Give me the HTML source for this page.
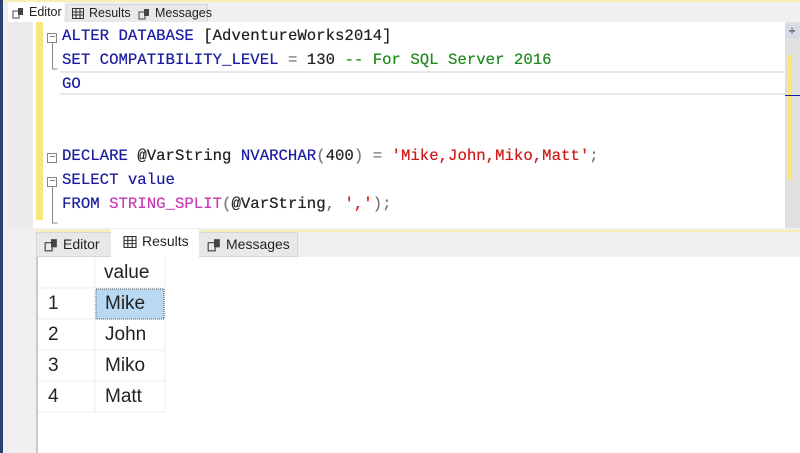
<!DOCTYPE html>
<html><head><style>
body{margin:0;width:800px;height:453px;overflow:hidden;background:#f0f0f0;position:relative;font-family:"Liberation Sans",sans-serif}
.a{position:absolute}
.code{font-family:"Liberation Mono",monospace;font-size:15.7px;color:#1c1ca0;white-space:pre;line-height:24px;text-shadow:0 0 0.4px currentColor}
.tab{position:absolute;font-size:12.5px;color:#222;height:18px;line-height:18px}
.tab2{position:absolute;font-size:14px;color:#222;line-height:26px}
.ico{display:inline-block;vertical-align:middle;margin-right:5px}
.g{position:absolute;font-size:19px;color:#222}
</style></head><body>
<div class="a" style="left:0;top:0;width:800px;height:2px;background:#f6f0b8"></div>
<div class="a" style="left:0;top:0;width:3px;height:453px;background:#2d4170"></div>
<!-- top tabs -->
<div class="a" style="left:8px;top:2px;width:56px;height:20px;background:#fff"></div>
<div class="tab" style="left:12px;top:3px"><svg class="ico" width="12" height="12" viewBox="0 0 12 12"><rect x="1" y="4" width="6" height="7" fill="none" stroke="#444"/><rect x="6" y="1" width="5" height="7" fill="#444"/></svg>Editor</div>
<div class="a" style="left:66px;top:4px;width:140px;height:18px;background:#e8e8e8;border:1px solid #d8d8d8;border-bottom:none"></div>
<div class="tab" style="left:72px;top:4px"><svg class="ico" width="12" height="11" viewBox="0 0 12 11"><rect x="0.5" y="0.5" width="11" height="10" fill="none" stroke="#333"/><path d="M0 4h12M0 7h12M4 0v11M8 0v11" stroke="#333"/></svg>Results</div>
<div class="tab" style="left:138px;top:4px"><svg class="ico" width="12" height="12" viewBox="0 0 12 12"><rect x="1" y="4" width="6" height="7" fill="none" stroke="#444"/><rect x="6" y="1" width="5" height="7" fill="#444"/></svg>Messages</div>
<!-- editor -->
<div class="a" style="left:8px;top:22px;width:777px;height:206px;background:#fff"></div>
<div class="a" style="left:8px;top:22px;width:25px;height:206px;background:#ebebeb"></div>
<div class="a" style="left:36px;top:22px;width:7px;height:198px;background:#f5e77a"></div>
<div class="a" style="left:60px;top:71px;width:725px;height:24px;border-top:2px solid #e8e8e8;border-bottom:2px solid #e8e8e8;box-sizing:border-box"></div>
<div class="a" style="left:785px;top:22px;width:15px;height:206px;background:#e0e0e0"></div>
<div class="a" style="left:788px;top:55px;width:4px;height:125px;background:#f5e77a"></div>
<div class="a" style="left:785px;top:95px;width:15px;height:1px;background:#1a1aa6"></div>
<div class="a" style="left:785px;top:24px;width:14px;height:14px;background:#d6dbe6;font-size:12px;text-align:center;line-height:14px">÷</div>
<!-- fold markers -->
<svg class="a" style="left:46px;top:28px" width="14" height="200">
<g fill="#fff" stroke="#888"><rect x="1.5" y="5.5" width="9" height="9"/><rect x="1.5" y="125.5" width="9" height="9"/><rect x="1.5" y="149.5" width="9" height="9"/></g>
<path d="M4 8.5h5M4 128.5h5M4 152.5h5M6.5 15v26h5M6.5 159v36h5" stroke="#888" fill="none"/>
</svg>
<div class="code a" style="left:62px;top:24px">ALTER DATABASE <span style="color:#222">[AdventureWorks2014]</span>
SET COMPATIBILITY_LEVEL <span style="color:#777">=</span> <span style="color:#222">130</span> <span style="color:#1e8a1e">-- For SQL Server 2016</span>
GO


DECLARE <span style="color:#222">@VarString</span> NVARCHAR<span style="color:#777">(</span><span style="color:#222">400</span><span style="color:#777">)</span> <span style="color:#777">=</span> <span style="color:#d01818">'Mike,John,Miko,Matt'</span><span style="color:#777">;</span>
SELECT value
FROM <span style="color:#c83bb4">STRING_SPLIT</span><span style="color:#777">(</span><span style="color:#222">@VarString</span><span style="color:#777">,</span> <span style="color:#d01818">','</span><span style="color:#777">);</span></div>
<!-- results tabs -->
<div class="a" style="left:35px;top:230px;width:765px;height:2px;background:#f6f0b8"></div>
<div class="a" style="left:36px;top:232px;width:262px;height:25px;background:#e8e8e8;border:1px solid #d6d6d6;box-sizing:border-box"></div>
<div class="a" style="left:111px;top:229px;width:88px;height:28px;background:#fff"></div>
<div class="tab2" style="left:44px;top:231px"><svg class="ico" width="14" height="14" viewBox="0 0 12 12"><rect x="1" y="4" width="6" height="7" fill="none" stroke="#444"/><rect x="6" y="1" width="5" height="7" fill="#444"/></svg>Editor</div>
<div class="tab2" style="left:123px;top:228px"><svg class="ico" width="14" height="12" viewBox="0 0 12 11"><rect x="0.5" y="0.5" width="11" height="10" fill="none" stroke="#333"/><path d="M0 4h12M0 7h12M4 0v11M8 0v11" stroke="#333"/></svg>Results</div>
<div class="tab2" style="left:207px;top:231px"><svg class="ico" width="14" height="14" viewBox="0 0 12 12"><rect x="1" y="4" width="6" height="7" fill="none" stroke="#444"/><rect x="6" y="1" width="5" height="7" fill="#444"/></svg>Messages</div>
<!-- grid -->
<div class="a" style="left:36px;top:257px;width:764px;height:196px;background:#fff;border-left:2px solid #c8c8c8;box-sizing:border-box"></div>
<svg class="a" style="left:38px;top:257px" width="130" height="160">
<path d="M57 0v155M127 0v155M0 31h127M0 62h127M0 93h127M0 124h127M0 155h127" stroke="#eeeeee" fill="none"/>
<rect x="58" y="32" width="68" height="30" fill="#b9d9f2" stroke="#555" stroke-dasharray="1 1"/>
</svg>
<div class="g" style="left:104px;top:262px">value</div>
<div class="g" style="left:48px;top:293px">1</div><div class="g" style="left:105px;top:293px">Mike</div>
<div class="g" style="left:48px;top:324px">2</div><div class="g" style="left:105px;top:324px">John</div>
<div class="g" style="left:48px;top:355px">3</div><div class="g" style="left:105px;top:355px">Miko</div>
<div class="g" style="left:48px;top:386px">4</div><div class="g" style="left:105px;top:386px">Matt</div>
</body></html>
